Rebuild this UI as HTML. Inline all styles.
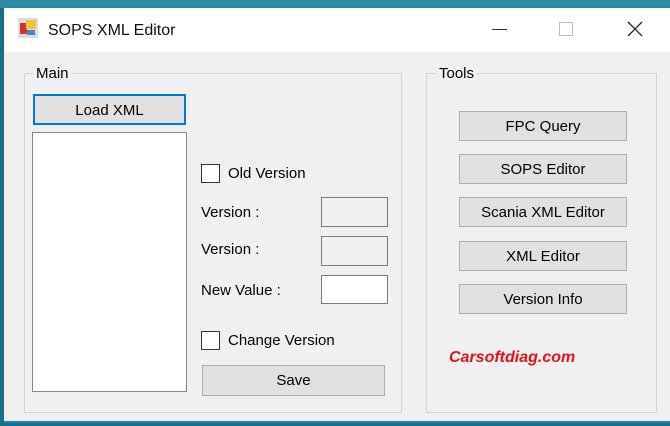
<!DOCTYPE html>
<html><head><style>
body{margin:0;width:670px;height:426px;overflow:hidden;background:#1a6f86;font-family:"Liberation Sans",sans-serif;position:relative}
div{position:absolute;box-sizing:border-box}
.t{font-size:15px;color:#000;white-space:nowrap;line-height:18px}
.btn{background:#e1e1e1;border:1px solid #adadad;font-size:15px;text-align:center;line-height:30px;color:#000}
.tb{background:#f0f0f0;border:1px solid #7a7a7a;width:67px;height:30px}
.cb{width:19px;height:19px;border:1px solid #333;background:#fff}
</style></head><body>
<div style="left:0;top:0;width:670px;height:8px;background:#2a8da0"></div>
<div style="left:4px;top:7px;width:666px;height:416px;background:#f0f0f0;border-top:1px solid #1a7fcf;border-bottom:2px solid #1a7fcf"></div>
<div style="left:5px;top:8px;width:665px;height:44px;background:#fff"></div>
<svg style="position:absolute;left:18px;top:18px" width="20" height="20"><rect x="0" y="0" width="20" height="20" fill="#ddd"/><rect x="2" y="5" width="7" height="11" fill="#c33"/><rect x="8" y="2" width="10" height="9" fill="#f3c23a"/><rect x="9" y="12" width="8" height="5" fill="#4a7fd0"/></svg>
<div class="t" style="left:48px;top:22px;font-size:16px;color:#111">SOPS XML Editor</div>
<div style="left:492px;top:29px;width:15px;height:1px;background:#333"></div>
<div style="left:559px;top:22px;width:14px;height:14px;border:1px solid #bbb"></div>
<svg style="position:absolute;left:627px;top:21px" width="16" height="16"><path d="M1 1L15 15M15 1L1 15" stroke="#222" stroke-width="1.3"/></svg>
<div style="left:24px;top:73px;width:378px;height:340px;border:1px solid #d5d5d5"></div>
<div class="t" style="left:34px;top:65px;background:#f0f0f0;padding:0 2px">Main</div>
<div class="btn" style="left:33px;top:94px;width:153px;height:31px;border:2px solid #0078d7;line-height:29px">Load XML</div>
<div style="left:32px;top:132px;width:155px;height:260px;background:#fff;border:1px solid #828790"></div>
<div class="cb" style="left:201px;top:164px"></div>
<div class="t" style="left:228px;top:165px">Old Version</div>
<div class="t" style="left:201px;top:204px">Version :</div>
<div class="tb" style="left:321px;top:197px"></div>
<div class="t" style="left:201px;top:241px">Version :</div>
<div class="tb" style="left:321px;top:236px"></div>
<div class="t" style="left:201px;top:282px">New Value :</div>
<div class="tb" style="left:321px;top:275px;background:#fff;height:29px"></div>
<div class="cb" style="left:201px;top:331px"></div>
<div class="t" style="left:228px;top:332px">Change Version</div>
<div class="btn" style="left:202px;top:365px;width:183px;height:31px">Save</div>
<div style="left:426px;top:73px;width:231px;height:340px;border:1px solid #d5d5d5"></div>
<div class="t" style="left:437px;top:65px;background:#f0f0f0;padding:0 2px">Tools</div>
<div class="btn" style="left:459px;top:111px;width:168px;height:30px">FPC Query</div>
<div class="btn" style="left:459px;top:154px;width:168px;height:30px">SOPS Editor</div>
<div class="btn" style="left:459px;top:197px;width:168px;height:30px">Scania XML Editor</div>
<div class="btn" style="left:459px;top:241px;width:168px;height:30px">XML Editor</div>
<div class="btn" style="left:459px;top:284px;width:168px;height:30px">Version Info</div>
<div class="t" style="left:449px;top:349px;color:#e8101c;font-weight:bold;font-style:italic;font-size:16px">Carsoftdiag.com</div>
</body></html>
